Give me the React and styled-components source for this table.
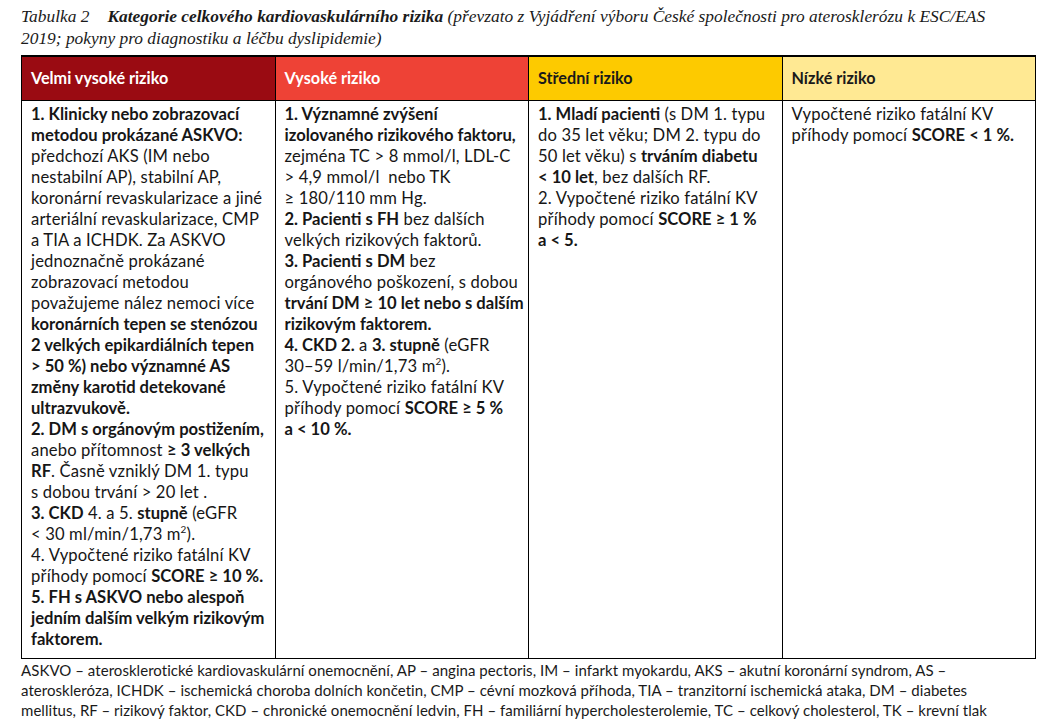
import React from "react";
import styled, { createGlobalStyle } from "styled-components";

const Global = createGlobalStyle`
  html, body { margin: 0; padding: 0; background: #ffffff; }
  body { font-family: "Lato", "Open Sans", sans-serif; color: #111; }
`;

const Page = styled.div`
  width: 1041px;
  padding: 5px 0 0 21px;
  box-sizing: border-box;
`;

const Caption = styled.div`
  font-family: "Liberation Serif", "Times New Roman", serif;
  font-style: italic;
  font-size: 17.4px;
  line-height: 22px;
  color: #1a1a1a;
  margin-bottom: 6px;
  white-space: nowrap;
`;

const CapLabel = styled.span`
  margin-right: 18px;
`;

const CapTitle = styled.b`
  font-weight: 700;
`;

const Table = styled.div`
  width: 1015px;
  display: grid;
  grid-template-columns: repeat(4, 1fr);
  border-top: 2px solid #000;
  border-left: 1px solid #000;
  border-bottom: 1.5px solid #000;
  box-sizing: border-box;
`;

const Head = styled.div`
  background: ${(p) => p.$bg};
  color: ${(p) => p.$fg};
  height: 44px;
  display: flex;
  align-items: center;
  padding: 0 9px 2px;
  font-size: 16.2px;
  font-weight: 700;
  border-right: 1px solid #000;
  border-bottom: 1px solid #000;
  box-sizing: border-box;
`;

const Cell = styled.div`
  padding: 3px 4px 7px 9px;
  min-height: 557px;
  font-size: 16.6px;
  line-height: 21px;
  letter-spacing: 0.15px;
  border-right: 1px solid #000;
  white-space: nowrap;
  color: #161616;
  box-sizing: border-box;
`;

const Line = styled.div``;

const B = styled.b`
  font-weight: 700;
  letter-spacing: 0;
`;

const Sup = styled.sup`
  font-size: 0.6em;
  line-height: 0;
`;

const Footer = styled.div`
  font-family: "Lato", "Open Sans", sans-serif;
  font-size: 15px;
  line-height: 20px;
  margin-top: 1px;
  color: #1a1a1a;
  white-space: nowrap;
  letter-spacing: 0.05px;
`;

const heads = [
  { t: "Velmi vysoké riziko", bg: "#9a0b12", fg: "#ffffff" },
  { t: "Vysoké riziko", bg: "#ee4236", fg: "#ffffff" },
  { t: "Střední riziko", bg: "#fdca00", fg: "#1a1a1a" },
  { t: "Nízké riziko", bg: "#ffe993", fg: "#1a1a1a" },
];

export default function App() {
  return (
    <>
      <Global />
      <Page>
        <Caption>
          <div>
            <CapLabel>Tabulka 2</CapLabel>
            <CapTitle>Kategorie celkového kardiovaskulárního rizika</CapTitle>{" "}
            (převzato z Vyjádření výboru České společnosti pro aterosklerózu k ESC/EAS
          </div>
          <div>2019; pokyny pro diagnostiku a léčbu dyslipidemie)</div>
        </Caption>
        <Table>
          {heads.map((h) => (
            <Head key={h.t} $bg={h.bg} $fg={h.fg}>
              {h.t}
            </Head>
          ))}
          <Cell>
            <Line><B>1. Klinicky nebo zobrazovací</B></Line>
            <Line><B>metodou prokázané ASKVO:</B></Line>
            <Line>předchozí AKS (IM nebo</Line>
            <Line>nestabilní AP), stabilní AP,</Line>
            <Line>koronární revaskularizace a jiné</Line>
            <Line>arteriální revaskularizace, CMP</Line>
            <Line>a TIA a ICHDK. Za ASKVO</Line>
            <Line>jednoznačně prokázané</Line>
            <Line>zobrazovací metodou</Line>
            <Line>považujeme nález nemoci více</Line>
            <Line><B>koronárních tepen se stenózou</B></Line>
            <Line><B>2 velkých epikardiálních tepen</B></Line>
            <Line><B>&gt; 50 %) nebo významné AS</B></Line>
            <Line><B>změny karotid detekované</B></Line>
            <Line><B>ultrazvukově.</B></Line>
            <Line><B>2. DM s orgánovým postižením,</B></Line>
            <Line>anebo přítomnost <B>≥ 3 velkých</B></Line>
            <Line><B>RF</B>. Časně vzniklý DM 1. typu</Line>
            <Line>s dobou trvání &gt; 20 let .</Line>
            <Line><B>3. CKD</B> 4. a 5. <B>stupně</B> (eGFR</Line>
            <Line>&lt; 30 ml/min/1,73 m<Sup>2</Sup>).</Line>
            <Line>4. Vypočtené riziko fatální KV</Line>
            <Line>příhody pomocí <B>SCORE ≥ 10 %.</B></Line>
            <Line><B>5. FH s ASKVO nebo alespoň</B></Line>
            <Line><B>jedním dalším velkým rizikovým</B></Line>
            <Line><B>faktorem.</B></Line>
          </Cell>
          <Cell>
            <Line><B>1. Významné zvýšení</B></Line>
            <Line><B>izolovaného rizikového faktoru,</B></Line>
            <Line>zejména TC &gt; 8 mmol/l, LDL-C</Line>
            <Line>&gt; 4,9 mmol/l&nbsp; nebo TK</Line>
            <Line>≥ 180/110 mm Hg.</Line>
            <Line><B>2. Pacienti s FH</B> bez dalších</Line>
            <Line>velkých rizikových faktorů.</Line>
            <Line><B>3. Pacienti s DM</B> bez</Line>
            <Line>orgánového poškození, s dobou</Line>
            <Line><B>trvání DM ≥ 10 let nebo s dalším</B></Line>
            <Line><B>rizikovým faktorem.</B></Line>
            <Line><B>4. CKD 2.</B> a <B>3. stupně</B> (eGFR</Line>
            <Line>30–59 l/min/1,73 m<Sup>2</Sup>).</Line>
            <Line>5. Vypočtené riziko fatální KV</Line>
            <Line>příhody pomocí <B>SCORE ≥ 5 %</B></Line>
            <Line><B>a &lt; 10 %.</B></Line>
          </Cell>
          <Cell>
            <Line><B>1. Mladí pacienti</B> (s DM 1. typu</Line>
            <Line>do 35 let věku; DM 2. typu do</Line>
            <Line>50 let věku) s <B>trváním diabetu</B></Line>
            <Line><B>&lt; 10 let</B>, bez dalších RF.</Line>
            <Line>2. Vypočtené riziko fatální KV</Line>
            <Line>příhody pomocí <B>SCORE ≥ 1 %</B></Line>
            <Line><B>a &lt; 5.</B></Line>
          </Cell>
          <Cell>
            <Line>Vypočtené riziko fatální KV</Line>
            <Line>příhody pomocí <B>SCORE &lt; 1 %.</B></Line>
          </Cell>
        </Table>
        <Footer>
          <div>ASKVO – aterosklerotické kardiovaskulární onemocnění, AP – angina pectoris, IM – infarkt myokardu, AKS – akutní koronární syndrom, AS –</div>
          <div>ateroskleróza, ICHDK – ischemická choroba dolních končetin, CMP – cévní mozková příhoda, TIA – tranzitorní ischemická ataka, DM – diabetes</div>
          <div>mellitus, RF – rizikový faktor, CKD – chronické onemocnění ledvin, FH – familiární hypercholesterolemie, TC – celkový cholesterol, TK – krevní tlak</div>
        </Footer>
      </Page>
    </>
  );
}
